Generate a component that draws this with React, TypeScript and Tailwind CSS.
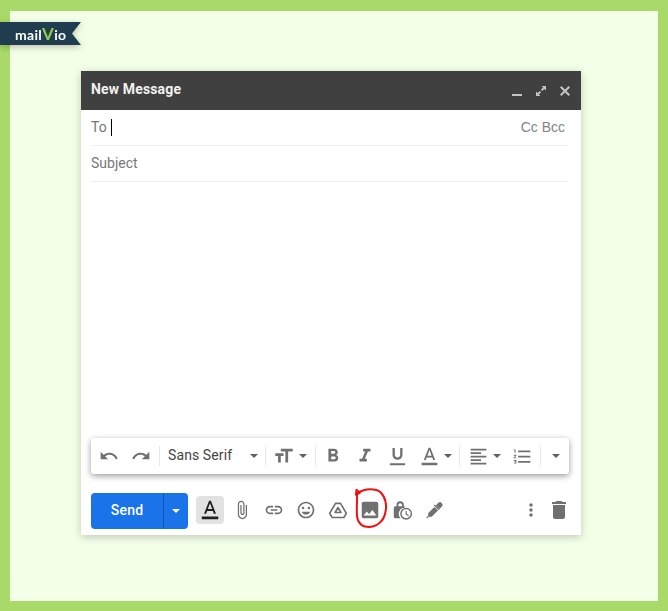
import React from "react";

const Icon = ({ d, size = 20, className = "" }: { d: string; size?: number; className?: string }) => (
  <svg width={size} height={size} viewBox="0 0 24 24" fill="currentColor" className={className}>
    <path d={d} />
  </svg>
);

const Caret = ({ className = "" }: { className?: string }) => (
  <span className={`flex justify-center w-[9px] ${className}`}>
    <span className="block w-0 h-0 border-x-4 border-x-transparent border-t-4 border-t-[#5f5f5f]" />
  </span>
);

const Sep = () => <span className="block w-px h-5 bg-[#e8e8e8]" />;

const icons = {
  undo: "M12.5 8c-2.65 0-5.05.99-6.9 2.6L2 7v9h9l-3.62-3.62c1.39-1.16 3.16-1.88 5.12-1.88 3.54 0 6.55 2.31 7.6 5.5l2.37-.78C21.08 11.03 17.15 8 12.5 8z",
  redo: "M18.4 10.6C16.55 8.99 14.15 8 11.5 8c-4.65 0-8.58 3.03-9.96 7.22L3.9 16c1.05-3.19 4.05-5.5 7.6-5.5 1.95 0 3.73.72 5.12 1.88L13 16h9V7l-3.6 3.6z",
  size: "M21.5 4v3h-5v12h-3V7h-5V4h13zM2.500 9h9v3h-3v7h-3v-7h-3V9z",
  bold: "M15.6 10.79c.97-.67 1.65-1.77 1.65-2.79 0-2.26-1.75-4-4-4H7v14h7.04c2.09 0 3.71-1.7 3.71-3.79 0-1.52-.86-2.82-2.15-3.42zM10 6.5h3c.83 0 1.5.67 1.5 1.5s-.67 1.5-1.5 1.5h-3v-3zm3.5 9H10v-3h3.5c.83 0 1.5.67 1.5 1.5s-.67 1.5-1.5 1.5z",
  italic: "M10 4v3h2.21l-3.42 8H6v3h8v-3h-2.21l3.42-8H18V4z",
  underline: "M12 15.500c3 0 5.200-2.200 5.200-5.200V3h-2.400v7.300c0 1.600-1.200 2.800-2.800 2.800s-2.800-1.200-2.800-2.800V3H6.800v7.300c0 3 2.200 5.200 5.200 5.200zM4 19h16v2H4z",
  color: "M11 2 5.5 16h2.25l1.12-3h6.25l1.12 3h2.25L13 2h-2zm-1.38 9L12 4.67 14.38 11H9.62zM3 19h18v3H3z",
  align: "M15 15H3v2h12v-2zm0-8H3v2h12V7zM3 13h18v-2H3v2zm0 8h18v-2H3v2zM3 3v2h18V3H3z",
  list: "M2 17h2v.5H3v1h1v.5H2v1h3v-4H2v1zm1-9h1V4H2v1h1v3zm-1 3h1.8L2 13.1v.9h3v-1H3.2L5 10.9V10H2v1zm5-6v2h14V5H7zm0 14h14v-2H7v2zm0-6h14v-2H7v2z",
  attach: "M16.5 6v11.5c0 2.21-1.79 4-4 4s-4-1.79-4-4V5c0-1.38 1.12-2.5 2.5-2.5s2.5 1.12 2.5 2.5v10.5c0 .55-.45 1-1 1s-1-.45-1-1V6H10v9.5c0 1.38 1.12 2.5 2.5 2.5s2.5-1.12 2.5-2.5V5c0-2.21-1.79-4-4-4S7 2.79 7 5v12.5c0 3.04 2.46 5.5 5.5 5.5s5.5-2.46 5.5-5.5V6h-1.5z",
  link: "M3.9 12c0-1.71 1.39-3.1 3.1-3.1h4V7H7c-2.76 0-5 2.24-5 5s2.24 5 5 5h4v-1.9H7c-1.71 0-3.1-1.39-3.1-3.1zM8 13h8v-2H8v2zm9-6h-4v1.9h4c1.71 0 3.1 1.39 3.1 3.1s-1.39 3.1-3.1 3.1h-4V17h4c2.76 0 5-2.24 5-5s-2.24-5-5-5z",
  smile: "M11.99 2C6.47 2 2 6.48 2 12s4.47 10 9.99 10C17.52 22 22 17.52 22 12S17.52 2 11.99 2zM12 20c-4.42 0-8-3.58-8-8s3.58-8 8-8 8 3.58 8 8-3.58 8-8 8zm3.5-9c.83 0 1.5-.67 1.5-1.5S16.33 8 15.5 8 14 8.67 14 9.5s.67 1.5 1.5 1.5zm-7 0c.83 0 1.5-.67 1.5-1.5S9.33 8 8.5 8 7 8.67 7 9.5 7.67 11 8.5 11zm3.5 6.5c2.33 0 4.31-1.46 5.11-3.5H6.89c.8 2.04 2.78 3.5 5.11 3.5z",
  image: "M21 19V5c0-1.1-.9-2-2-2H5c-1.1 0-2 .9-2 2v14c0 1.1.9 2 2 2h14c1.1 0 2-.9 2-2zM8.5 13.5l2.5 3.01L14.5 12l4.5 6H5l3.5-4.5z",
  trash: "M6 19c0 1.1.9 2 2 2h8c1.1 0 2-.9 2-2V7H6v12zM19 4h-3.5l-1-1h-5l-1 1H5v2h14V4z",
  dots: "M12 8c1.1 0 2-.9 2-2s-.9-2-2-2-2 .9-2 2 .9 2 2 2zm0 2c-1.1 0-2 .9-2 2s.9 2 2 2 2-.9 2-2-.9-2-2-2zm0 6c-1.1 0-2 .9-2 2s.9 2 2 2 2-.9 2-2-.9-2-2-2z",
  pen: "M20.700 3.300a2.400 2.400 0 0 0-3.400 0l-3 3 4.400 4.400 2.500-2.500a3 3 0 0 0-.5-4.900zM13 5.400l-1.200 1.200 5.600 5.600 1.200-1.200zM12.500 8.300L5 15.800V19l-2.200 2.200.9.9L5.900 20h3.300l7.500-7.500z",
};

const FormatBtn = ({ d, size = 20 }: { d: string; size?: number }) => (
  <span className="flex items-center justify-center w-8 h-8 text-[#707070]">
    <Icon d={d} size={size} />
  </span>
);

function FormatBar() {
  return (
    <div className="flex items-center h-9 w-[478px] pl-[2px] bg-white rounded-[3px] shadow-[0_2px_6px_rgba(0,0,0,0.4)]">
      <FormatBtn d={icons.undo} />
      <FormatBtn d={icons.redo} />
      <span className="ml-[2px] mr-2">
        <Sep />
      </span>
      <span className="w-[81px] text-[14px] tracking-[0.1px] text-[#444444] -mt-[1px]">Sans Serif</span>
      <Caret />
      <span className="ml-[7px]">
        <Sep />
      </span>
      <span className="flex items-center justify-center w-[28px] h-8 ml-[4px] text-[#707070]">
        <Icon d={icons.size} size={22} />
      </span>
      <Caret />
      <span className="ml-[8px]">
        <Sep />
      </span>
      <span className="ml-[1px]" />
      <FormatBtn d={icons.bold} size={22} />
      <FormatBtn d={icons.italic} size={22} />
      <FormatBtn d={icons.underline} size={23} />
      <FormatBtn d={icons.color} size={21} />
      <Caret className="-ml-[2px]" />
      <span className="ml-[7px] mr-[2px]">
        <Sep />
      </span>
      <FormatBtn d={icons.align} size={21} />
      <Caret className="-ml-[2px]" />
      <span className="w-[5px]" />
      <FormatBtn d={icons.list} size={21} />
      <span className="ml-[2px] mr-[10px]">
        <Sep />
      </span>
      <Caret />
    </div>
  );
}

function ActionBar() {
  return (
    <div className="relative flex h-9 mx-[10px] mt-[19px] mb-[6px]">
      <div className="flex h-9 w-[97px] rounded-[4px] bg-[#1a73e8] text-white">
        <span className="flex items-center justify-center w-[72px] pb-[1px] text-[14px] font-medium tracking-[0.2px]">Send</span>
        <span className="flex items-center justify-center flex-1 border-l border-[#1557b0]">
          <span className="block w-0 h-0 border-x-4 border-x-transparent border-t-4 border-t-white" />
        </span>
      </div>
      <div className="flex items-center flex-1 h-[34px]">
        <span className="flex items-center justify-center w-7 h-7 ml-2 rounded-[4px] bg-[#e2e2e2] text-[#202020]">
          <Icon d={icons.color} size={22} />
        </span>
        <span className="w-[2px]" />
        <FormatBtn d={icons.attach} size={20} />
        <FormatBtn d={icons.link} size={20} />
        <FormatBtn d={icons.smile} size={20} />
        <span className="flex items-center justify-center w-8 h-8 text-[#707070]">
          <svg width="20" height="20" viewBox="0 0 24 24" fill="none" stroke="currentColor" strokeWidth="2" strokeLinejoin="round">
            <path d="M9 4h6l7 12-3 5H5l-3-5z" />
            <path d="M12 9l3.500 6h-7z" />
          </svg>
        </span>
        <FormatBtn d={icons.image} size={22} />
        <span className="flex items-center justify-center w-8 h-8 text-[#707070]">
          <svg width="22" height="22" viewBox="0 0 24 24" fill="currentColor">
            <path d="M6 8V6.500a4 4 0 0 1 8 0V8h1v1.200a7 7 0 0 0-4.600 11.800H5a2 2 0 0 1-2-2V10a2 2 0 0 1 2-2zm2 0h4V6.500a2 2 0 0 0-4 0z" />
            <path fillRule="evenodd" d="M16.500 9.500a6.500 6.500 0 1 1 0 13 6.500 6.500 0 0 1 0-13zm0 1.600a4.900 4.900 0 1 0 0 9.800 4.900 4.900 0 0 0 0-9.800zM15.900 13h1.300v3.200l2.400 1.400-.6 1.100-3.100-1.900z" />
          </svg>
        </span>
        <FormatBtn d={icons.pen} size={20} />
        <div className="flex-1" />
        <span className="flex items-center justify-center w-6 h-8 text-[#707070]">
          <Icon d={icons.dots} size={20} />
        </span>
        <span className="flex items-center justify-center w-8 h-8 -mr-[4px] text-[#707070]">
          <Icon d={icons.trash} size={24} />
        </span>
      </div>
      {/* red marker scribble round the image button */}
      <svg className="absolute left-[264px] top-[-5px]" width="34" height="42" viewBox="0 0 34 42" fill="none" stroke="#f01010" strokeWidth="2" strokeLinejoin="round">
        <path d="M2 5.300C6 3 10 1.300 15 1.300c4 0 8 .7 10.500 2.900 2.500 2.600 4.500 6 5 9.500.7 3 .7 6 .3 8.300-.6 4.500-2 8.500-4.500 11.200-3 3.500-7.500 5.800-12 5.800-3.500 0-6.800-.8-8.800-3-2.500-2.500-3.300-5-3.500-8-.4-6-.2-11 .1-16.300z" />
        <path d="M1.500 1.800l-.6 5 3.800-2z" fill="#f01010" />
      </svg>
    </div>
  );
}

export default function App() {
  return (
    <div className="relative w-[668px] h-[611px] pt-[11px] px-[10px] pb-[10px] bg-[#a9d968] font-['Roboto',sans-serif]">
      <div className="w-full h-full pl-[71px] pt-[60px] bg-[#f4ffe8]">
        <div className="flex flex-col w-[500px] h-[464px] bg-white shadow-[0_2px_8px_rgba(0,0,0,0.22)]">
          <div className="flex items-center justify-between h-[39px] pl-[10px] pr-[11px] bg-[#404040]">
            <span className="mb-[2px] text-[14px] font-bold tracking-[0.15px] text-[#f1f1f1]">New Message</span>
            <div className="flex items-center gap-[12px] text-[#c4c4c4]">
              <svg width="10" height="10" viewBox="0 0 10 10" fill="currentColor">
                <rect x="0" y="8" width="10" height="2" />
              </svg>
              <svg width="10" height="10" viewBox="0 0 10 10" fill="currentColor" className="ml-[2px]">
                <path d="M5.500 0H10v4.500L8.400 2.900 6.200 5.100 4.900 3.800 7.100 1.600zM0 5.500l1.600 1.600 2.200-2.200 1.300 1.300-2.200 2.200L4.500 10H0z" />
              </svg>
              <svg width="10" height="10" viewBox="0 0 10 10" stroke="currentColor" strokeWidth="2" className="ml-[2px]">
                <path d="M.7.700l8.600 8.600M9.300.700L.7 9.300" />
              </svg>
            </div>
          </div>
          <div className="flex items-center justify-between h-9 mx-[10px] mr-[13px] border-b border-[#eceff1] text-[14px] text-[#777777]">
            <div className="flex items-center">
              <span>To</span>
              <span className="block w-px h-[17px] ml-[4px] bg-black" />
            </div>
            <span className="mr-[3px] text-[#858585] font-['Liberation_Sans',sans-serif]">Cc Bcc</span>
          </div>
          <div className="flex items-center h-9 mx-[10px] mr-[13px] border-b border-[#eceff1] text-[14px] text-[#777777]">
            Subject
          </div>
          <div className="flex flex-col justify-end flex-1 px-[10px]">
            <FormatBar />
          </div>
          <ActionBar />
        </div>
      </div>
      {/* ribbon logo */}
      <div className="absolute left-0 top-[22px] flex items-center w-[81px] h-[23px] drop-shadow-[0_2px_3px_rgba(0,0,0,0.25)]">
        <svg className="absolute inset-0" width="81" height="23" viewBox="0 0 81 23">
          <path d="M0 0h81l-9 11.500 9 11.500H0z" fill="#203d4f" />
        </svg>
        <span className="relative flex items-baseline pl-[15px] text-[14px] leading-none font-bold tracking-[0.3px] text-white font-['Lato',sans-serif]">
          mail<span className="text-[17px] leading-none text-[#8fc94f]">V</span>io
        </span>
      </div>
    </div>
  );
}
